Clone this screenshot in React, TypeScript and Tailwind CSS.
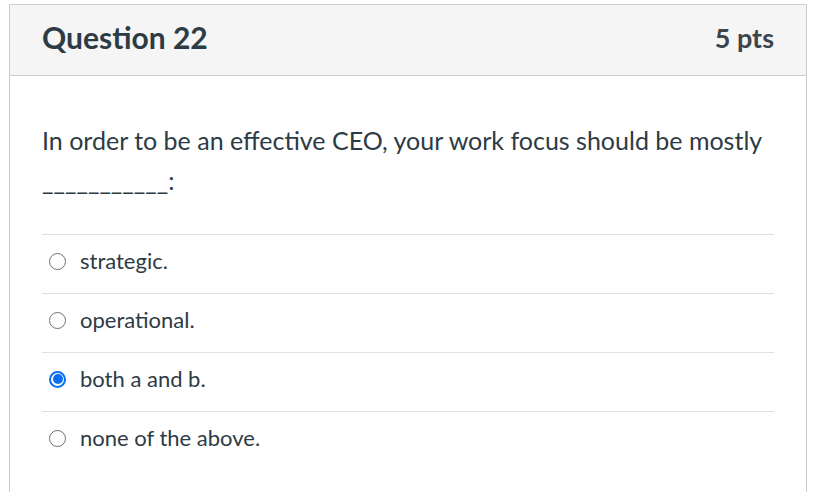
const options = [
  { label: "strategic.", checked: false },
  { label: "operational.", checked: false },
  { label: "both a and b.", checked: true },
  { label: "none of the above.", checked: false },
];

function Radio({ checked }: { checked: boolean }) {
  if (checked) {
    return (
      <span className="flex h-[17px] w-[17px] items-center justify-center rounded-full border-[2px] border-[#0b6ff0]">
        <span className="h-[10px] w-[10px] rounded-full bg-[#0b6ff0]" />
      </span>
    );
  }
  return <span className="h-[17px] w-[17px] rounded-full border-[1.5px] border-[#6f6f6f] bg-white" />;
}

export default function App() {
  return (
    <div
      className="h-[492px] w-[814px] overflow-hidden bg-white pl-[9px] pt-[4px] text-[#2d3b45]"
      style={{ fontFamily: "Lato, 'Liberation Sans', sans-serif" }}
    >
      <div className="h-[600px] w-[798px] border border-[#c7cdd1]">
        <div className="flex h-[71px] items-center justify-between border-b border-[#c7cdd1] bg-[#f5f5f5] px-[32px] pb-[6px]">
          <h2 className="text-[30px] font-bold leading-none">Question 22</h2>
          <span className="text-[27px] font-bold leading-none text-[#3d454c]">5 pts</span>
        </div>

        <div className="px-[32px] pt-[44px]">
          <p className="text-[25px] leading-[40px]">
            In order to be an effective CEO, your work focus should be mostly ___________:
          </p>

          <div className="mt-[34px]">
            {options.map((o) => (
              <div
                key={o.label}
                className="flex h-[59px] items-center gap-[14px] border-t border-[#e0e0e0] pb-[6px] pl-[7px]"
              >
                <Radio checked={o.checked} />
                <span className="text-[22px] leading-none">{o.label}</span>
              </div>
            ))}
          </div>
        </div>
      </div>
    </div>
  );
}
